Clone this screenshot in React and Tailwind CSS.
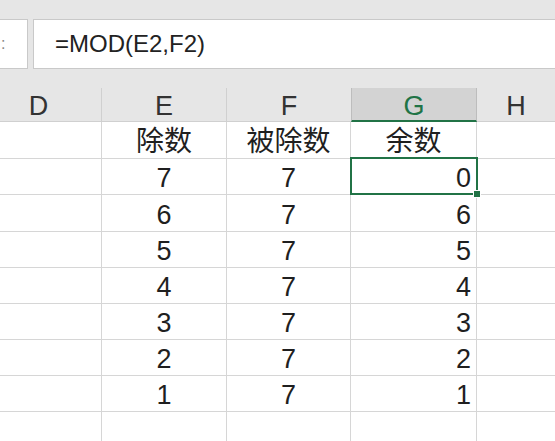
const rows = [
  { e: '除数', f: '被除数', g: '余数', head: true, h: 'h-[37px]' },
  { e: '7', f: '7', g: '0', h: 'h-[36px]', selected: true },
  { e: '6', f: '7', g: '6', h: 'h-[37px]' },
  { e: '5', f: '7', g: '5', h: 'h-[36px]' },
  { e: '4', f: '7', g: '4', h: 'h-[36px]' },
  { e: '3', f: '7', g: '3', h: 'h-[36px]' },
  { e: '2', f: '7', g: '2', h: 'h-[36px]' },
  { e: '1', f: '7', g: '1', h: 'h-[36px]' },
  { e: '', f: '', g: '', h: 'h-[36px]' },
];

const cjk = { fontFamily: '"Liberation Sans", "Noto Sans CJK SC", sans-serif' };

function Cell({ value, head, align = 'center', className = '' }) {
  const size = head ? 'text-[28px]' : 'text-[27px]';
  const just = align === 'right' ? 'justify-end pr-[5px]' : 'justify-center';
  return (
    <div className={`flex items-center pt-[4px] leading-none text-[#1f1f1f] border-r border-[#d6d6d6] ${just} ${size} ${className}`}>
      {value}
    </div>
  );
}

export default function App() {
  return (
    <div className="w-[555px] h-[441px] overflow-hidden bg-white" style={cjk}>
      {/* formula bar */}
      <div className="bg-[#e6e6e6] pt-[19px] pb-[19px] flex">
        <div className="w-[28px] h-[50px] bg-white border border-l-0 border-[#c9c9c9] flex items-center text-[16px] text-[#888] leading-none">
          <span className="ml-[1px]">:</span>
        </div>
        <div className="ml-[5px] flex-1 h-[50px] bg-white border border-r-0 border-[#c9c9c9] flex items-center pl-[21px] text-[24px] leading-none text-[#222]">
          =MOD(E2,F2)
        </div>
      </div>

      {/* column headers */}
      <div className="flex h-[34px] bg-[#e6e6e6] border-b border-[#d0d0d0]">
        <div className="w-[102px] border-r border-[#d0d0d0] flex items-center justify-center pr-[24px] pt-[4px] text-[27px] leading-none text-[#333]">D</div>
        <div className="w-[125px] border-r border-[#d0d0d0] flex items-center justify-center pt-[4px] text-[27px] leading-none text-[#333]">E</div>
        <div className="w-[124px] flex items-center justify-center pt-[4px] text-[27px] leading-none text-[#333]">F</div>
        <div className="w-[126px] -mb-px bg-[#d3d3d3] border-x border-[#bdbdbd] border-b-2 border-b-[#217346] flex items-center justify-center pt-[4px] text-[27px] leading-none text-[#217346]">G</div>
        <div className="flex-1 flex items-center justify-center pt-[4px] text-[27px] leading-none text-[#333]">H</div>
      </div>

      {/* grid */}
      {rows.map((r, i) => (
        <div key={i} className={`flex border-b border-[#d6d6d6] ${r.h}`}>
          <Cell value="" className="w-[102px]" />
          <Cell value={r.e} head={r.head} className="w-[125px]" />
          <Cell value={r.f} head={r.head} className="w-[124px]" />
          <div className={`relative w-[126px] flex ${r.selected ? 'z-10' : ''}`}>
            <Cell value={r.g} head={r.head} align={r.head ? 'center' : 'right'} className="w-full" />
            {r.selected && (
              <>
                <div className="absolute -left-px -top-[2px] -right-px -bottom-px border-2 border-[#217346]" />
                <div className="absolute -right-[4px] -bottom-[4px] w-[8px] h-[8px] bg-[#217346] border border-white" />
              </>
            )}
          </div>
          <div className="flex-1" />
        </div>
      ))}
    </div>
  );
}
